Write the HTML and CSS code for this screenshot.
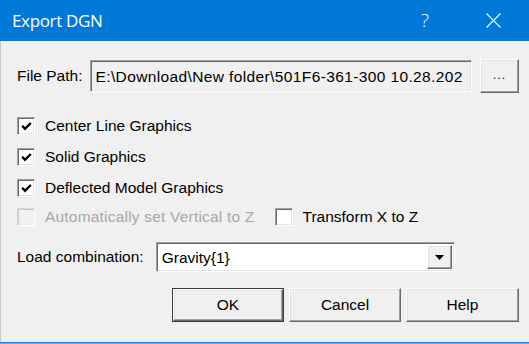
FILE: index.html
```html
<!DOCTYPE html>
<html>
<head>
<meta charset="utf-8">
<link rel="stylesheet" href="styles.css">
</head>
<body>
<div class="dialog">
  <div class="titlebar">
    <span class="title">Export DGN</span>
    <span class="help-q">?</span>
    <svg class="close-x" width="15" height="15" viewBox="0 0 15 15"><path d="M0.5 0.5 L14.5 14.5 M14.5 0.5 L0.5 14.5" stroke="#fff" stroke-width="1.1" fill="none"/></svg>
  </div>
  <div class="content">
    <div class="row-path">
      <span class="label">File Path:</span>
      <div class="field sunken"><span class="field-text">E:\Download\New folder\501F6-361-300 10.28.202</span></div>
      <div class="btn raised dots">...</div>
    </div>

    <div class="check-row first">
      <span class="box sunken"><svg width="11" height="9" viewBox="0 0 11 9"><polyline points="1.2,3.8 4,6.8 9.8,1" stroke="#000" stroke-width="2.4" fill="none"/></svg></span>
      <span class="clabel">Center Line Graphics</span>
    </div>
    <div class="check-row">
      <span class="box sunken"><svg width="11" height="9" viewBox="0 0 11 9"><polyline points="1.2,3.8 4,6.8 9.8,1" stroke="#000" stroke-width="2.4" fill="none"/></svg></span>
      <span class="clabel">Solid Graphics</span>
    </div>
    <div class="check-row">
      <span class="box sunken"><svg width="11" height="9" viewBox="0 0 11 9"><polyline points="1.2,3.8 4,6.8 9.8,1" stroke="#000" stroke-width="2.4" fill="none"/></svg></span>
      <span class="clabel">Deflected Model Graphics</span>
    </div>
    <div class="check-row last">
      <div class="check-pair">
        <span class="box sunken disabled"></span>
        <span class="clabel dis">Automatically set Vertical to Z</span>
      </div>
      <div class="check-pair second">
        <span class="box sunken"></span>
        <span class="clabel">Transform X to Z</span>
      </div>
    </div>

    <div class="row-combo">
      <span class="label">Load combination:</span>
      <div class="combo sunken">
        <span class="combo-text">Gravity{1}</span>
        <span class="drop raised"><svg width="9" height="5" viewBox="0 0 9 5"><polygon points="0,0 9,0 4.5,5" fill="#000"/></svg></span>
      </div>
    </div>

    <div class="row-buttons">
      <div class="btn default"><div class="btn-inner raised">OK</div></div>
      <div class="btn raised push">Cancel</div>
      <div class="btn raised push">Help</div>
    </div>
  </div>
  <div class="footer"></div>
</div>
</body>
</html>
```

FILE: styles.css
```css
* { box-sizing: border-box; }
html, body { margin: 0; padding: 0; }
body {
  width: 529px;
  height: 344px;
  overflow: hidden;
  background: #f0f0f0;
  font-family: "Liberation Sans", Arial, sans-serif;
  font-size: 15.5px;
  color: #000;
}
.dialog {
  width: 529px;
  height: 344px;
  display: flex;
  flex-direction: column;
  background: #f0f0f0;
  border-left: 1px solid #c8c8c8;
}
.titlebar {
  height: 41px;
  background: #0078d7;
  color: #fff;
  display: flex;
  align-items: center;
  padding-left: 12px;
  margin-left: -1px;
}
.title {
  font-family: "Open Sans", "Noto Sans", sans-serif;
  font-size: 17px;
  letter-spacing: -0.35px;
  flex: 1;
  padding-bottom: 1px;
}
.help-q {
  font-family: "Open Sans", "Noto Sans", sans-serif;
  font-size: 19px;
  font-weight: 300;
  margin-right: 57px;
  padding-bottom: 2px;
}
.close-x { margin-right: 28px; margin-bottom: 1px; }

.content {
  flex: 1;
  padding: 17px 10px 0 16px;
  display: flex;
  flex-direction: column;
}
.sunken {
  border: 1px solid;
  border-color: #a0a0a0 #ffffff #ffffff #a0a0a0;
  box-shadow: inset 1px 1px 0 #696969, inset -1px -1px 0 #e3e3e3;
}
.raised {
  border: 1px solid;
  border-color: #ffffff #696969 #696969 #ffffff;
  box-shadow: inset -1px -1px 0 #a0a0a0, inset 1px 1px 0 #e3e3e3;
  background: #f0f0f0;
}
.row-path {
  display: flex;
  align-items: center;
  height: 35px;
}
.label { white-space: nowrap; }
.field {
  margin-left: 8px;
  width: 382px;
  height: 32px;
  background: #f0f0f0;
  overflow: hidden;
  white-space: nowrap;
  display: flex;
  align-items: center;
  padding-left: 4px;
  padding-right: 2px;
  padding-top: 2px;
}
.field-text { display: block; letter-spacing: 0.38px; }
.dots {
  margin-left: 8px;
  width: 39px;
  height: 35px;
  display: flex;
  align-items: center;
  justify-content: center;
  font-size: 12px;
  letter-spacing: 1px;
  padding-bottom: 1px;
}
.check-row {
  display: flex;
  align-items: center;
  height: 18px;
  margin-top: 13px;
}
.check-row.first { margin-top: 24px; }
.check-row.last { margin-top: 11px; }
.check-pair { display: flex; align-items: center; }
.check-pair.second { margin-left: 20px; }
.box {
  width: 18px;
  height: 18px;
  background: #fff;
  display: flex;
  align-items: center;
  justify-content: center;
  flex: none;
}
.box svg { display: block; margin-left: 1px; }
.box.disabled {
  background: #f0f0f0;
  border-color: #d4d4d4 #fff #fff #d4d4d4;
  box-shadow: inset 1px 1px 0 #c8c8c8, inset -1px -1px 0 #ececec;
}
.clabel { margin-left: 10px; white-space: nowrap; }
.clabel.dis { color: #a8a8a8; letter-spacing: 0.2px; }

.row-combo {
  display: flex;
  align-items: center;
  margin-top: 16px;
  height: 30px;
}
.combo {
  margin-left: 12px;
  width: 299px;
  height: 30px;
  background: #fff;
  display: flex;
  align-items: center;
  padding: 2px 2px 2px 5px;
}
.combo-text { flex: 1; padding-top: 1px; }
.drop {
  width: 25px;
  height: 24px;
  display: flex;
  align-items: center;
  justify-content: center;
  padding-top: 1px;
}
.drop svg { display: block; }

.row-buttons {
  display: flex;
  justify-content: flex-end;
  margin-top: 16px;
  gap: 5px;
}
.btn {
  height: 34px;
  display: flex;
  align-items: center;
  justify-content: center;
}
.push { width: 112px; }
.push:last-child { width: 113px; }
.default {
  width: 112px;
  border: 1px solid #3c3c3c;
  padding: 0;
}
.btn-inner {
  width: 100%;
  height: 100%;
  display: flex;
  align-items: center;
  justify-content: center;
}
.footer {
  height: 2px;
  border-top: 1px solid #1b7fd4;
  background: #8da3b8;
  margin-left: -1px;
}
```
